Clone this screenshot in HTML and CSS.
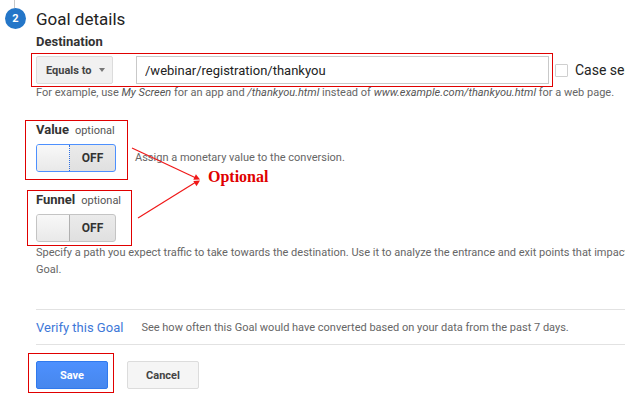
FILE: index.html
```html
<!DOCTYPE html>
<html lang="en">
<head>
    <meta charset="UTF-8">
    <title>Goal details</title>
    <link rel="stylesheet" href="styles.css">
</head>
<body>
    <div class="page">
        <div class="step">
            <div class="step-marker">
                <span class="step-line"></span>
                <span class="step-num">2</span>
            </div>
            <div class="step-body">
                <h2 class="step-title">Goal details</h2>
                <div class="field-label">Destination</div>
                <div class="dest-row">
                    <div class="dest-controls mark mark-dest">
                        <button class="select-btn">Equals to <span class="caret"></span></button>
                        <input class="text-input" type="text" value="/webinar/registration/thankyou">
                    </div>
                    <label class="check"><span class="check-box"></span>Case sensitive</label>
                </div>
                <p class="hint">For example, use <i>My Screen</i> for an app and <i>/thankyou.html</i> instead of <i>www.example.com/thankyou.html</i> for a web page.</p>

                <div class="option-row">
                    <div class="option mark mark-value">
                        <div class="option-label"><b>Value</b><span>optional</span></div>
                        <div class="toggle focused"><span class="knob"></span><span class="state">OFF</span></div>
                    </div>
                    <p class="option-desc">Assign a monetary value to the conversion.</p>
                </div>

                <div class="option option-funnel mark mark-funnel">
                    <div class="option-label"><b>Funnel</b><span>optional</span></div>
                    <div class="toggle"><span class="knob"></span><span class="state">OFF</span></div>
                </div>
                <p class="desc">Specify a path you expect traffic to take towards the destination. Use it to analyze the entrance and exit points that impact your Goal.</p>

                <div class="verify">
                    <a class="verify-link" href="#">Verify this Goal</a>
                    <span class="verify-text">See how often this Goal would have converted based on your data from the past 7 days.</span>
                </div>

                <div class="actions">
                    <button class="btn btn-primary mark mark-save">Save</button>
                    <button class="btn">Cancel</button>
                </div>
            </div>
        </div>

        <svg class="annotation" width="625" height="396" viewBox="0 0 625 396">
            <line x1="132" y1="148" x2="196" y2="178" stroke="#f01818" stroke-width="1.2"/>
            <line x1="138" y1="218" x2="196" y2="182" stroke="#f01818" stroke-width="1.2"/>
            <polygon points="200,179.5 193.3,179.7 195.9,174.3" fill="#f01818"/>
            <polygon points="200,180.5 196.5,186.3 193.3,181.1" fill="#f01818"/>
        </svg>
        <span class="annotation-text">Optional</span>
    </div>
</body>
</html>
```

FILE: styles.css
```css
html, body {
    margin: 0;
    overflow: hidden;
    background: #fff;
}

body {
    font-family: Roboto, "Liberation Sans", Arial, sans-serif;
    color: #222;
}

.page {
    position: relative;
    width: 720px;
    height: 396px;
}

.step {
    display: flex;
}

.step-marker {
    width: 36px;
    flex: none;
    display: flex;
    flex-direction: column;
}

.step-line {
    width: 1px;
    height: 8px;
    margin-left: 14px;
    background: #c8c8c8;
}

.step-num {
    width: 21px;
    height: 21px;
    margin-left: 5px;
    border-radius: 50%;
    background: #2476c8;
    color: #fff;
    font-size: 11px;
    font-weight: bold;
    line-height: 21px;
    text-align: center;
}

.step-body {
    flex: 1;
}

.step-title {
    margin: 9px 0 0;
    font-size: 17px;
    font-weight: normal;
    line-height: 20px;
    color: #222;
}

.field-label {
    margin-top: 5px;
    font-size: 13px;
    font-weight: bold;
    line-height: 16px;
    color: #333;
}

.dest-row {
    display: flex;
    align-items: center;
    margin-top: 6px;
}

.dest-controls {
    display: flex;
}

.select-btn {
    width: 77px;
    height: 28px;
    padding: 0 0 0 9px;
    display: flex;
    align-items: center;
    background: #f1f1f1;
    border: 1px solid #dcdcdc;
    border-radius: 2px;
    font-family: inherit;
    font-size: 11px;
    font-weight: bold;
    color: #444;
}

.caret {
    margin-left: 8px;
    border-left: 3.5px solid transparent;
    border-right: 3.5px solid transparent;
    border-top: 4px solid #777;
}

.text-input {
    width: 413px;
    height: 28px;
    box-sizing: border-box;
    margin-left: 23px;
    padding: 0 8px;
    border: 1px solid #c9c9c9;
    font-family: inherit;
    font-size: 13px;
    color: #222;
    outline: none;
}

.check {
    display: flex;
    align-items: center;
    margin-left: 6px;
    font-size: 14px;
    color: #222;
    white-space: nowrap;
}

.check-box {
    width: 13px;
    height: 13px;
    box-sizing: border-box;
    margin-right: 7px;
    border: 1px solid #cfcfcf;
    border-radius: 1px;
    background: #fff;
}

.hint {
    margin: 2px 0 0;
    font-size: 11px;
    line-height: 14px;
    color: #666;
    white-space: nowrap;
}

.hint i {
    color: #555;
}

.option-row {
    display: flex;
    align-items: flex-start;
    margin-top: 22px;
}

.option {
    width: 80px;
}

.option-funnel {
    margin-top: 20px;
}

.option-label {
    height: 16px;
    margin-bottom: 6px;
    font-size: 13px;
    line-height: 16px;
    color: #333;
    white-space: nowrap;
}

.option-label span {
    margin-left: 6px;
    font-size: 11px;
    color: #555;
}

.toggle {
    display: flex;
    width: 80px;
    height: 28px;
    box-sizing: border-box;
    border: 1px solid #c4c4c4;
    border-radius: 3px;
    background: linear-gradient(#ebebeb, #e0e0e0);
    overflow: hidden;
}

.knob {
    width: 32px;
    flex: none;
    border-right: 1px solid #b0b0b0;
    background: linear-gradient(#f8f8f8, #e9e9e9);
}

.toggle.focused {
    border-color: #4d90fe;
}

.toggle.focused .knob {
    border-right: 1px dotted #2f6fe0;
}

.state {
    flex: 1;
    font-size: 12px;
    font-weight: bold;
    line-height: 26px;
    text-align: center;
    color: #333;
}

.option-desc {
    margin: 29px 0 0 19px;
    font-size: 11px;
    line-height: 14px;
    color: #666;
    white-space: nowrap;
}

.desc {
    margin: 2px 0 0;
    width: 625px;
    font-size: 11px;
    line-height: 17px;
    color: #666;
}

.verify {
    display: flex;
    align-items: center;
    height: 34px;
    margin-top: 31px;
    border-top: 1px solid #e2e2e2;
    border-bottom: 1px solid #e2e2e2;
    white-space: nowrap;
}

.verify-link {
    font-size: 13px;
    color: #3e78d8;
    text-decoration: none;
}

.verify-text {
    margin-left: 18px;
    font-size: 11px;
    color: #666;
}

.actions {
    display: flex;
    gap: 19px;
    margin-top: 16px;
}

.btn {
    width: 72px;
    height: 28px;
    padding: 0;
    border: 1px solid #dcdcdc;
    border-radius: 2px;
    background: #f5f5f5;
    font-family: inherit;
    font-size: 11px;
    font-weight: bold;
    color: #444;
}

.btn-primary {
    background: linear-gradient(#4d90fe, #4787ed);
    border-color: #3079ed;
    color: #fff;
}

/* red annotation boxes drawn over the form */
.mark {
    position: relative;
}

.mark::after {
    content: "";
    position: absolute;
    border: 1px solid #e00000;
    pointer-events: none;
}

.mark-dest::after {
    top: -3px;
    right: -4px;
    bottom: -3px;
    left: -5px;
}

.mark-value::after {
    top: -2px;
    right: -12px;
    bottom: -8px;
    left: -11px;
}

.mark-funnel::after {
    top: -2px;
    right: -16px;
    bottom: -4px;
    left: -9px;
}

.mark-save::after {
    top: -9px;
    right: -7px;
    bottom: -5px;
    left: -9px;
}

.annotation {
    position: absolute;
    top: 0;
    left: 0;
    pointer-events: none;
}

.annotation-text {
    position: absolute;
    top: 169px;
    left: 208px;
    font-family: "Liberation Serif", "Times New Roman", serif;
    font-size: 16px;
    font-weight: bold;
    line-height: 16px;
    color: #e00000;
}
```
